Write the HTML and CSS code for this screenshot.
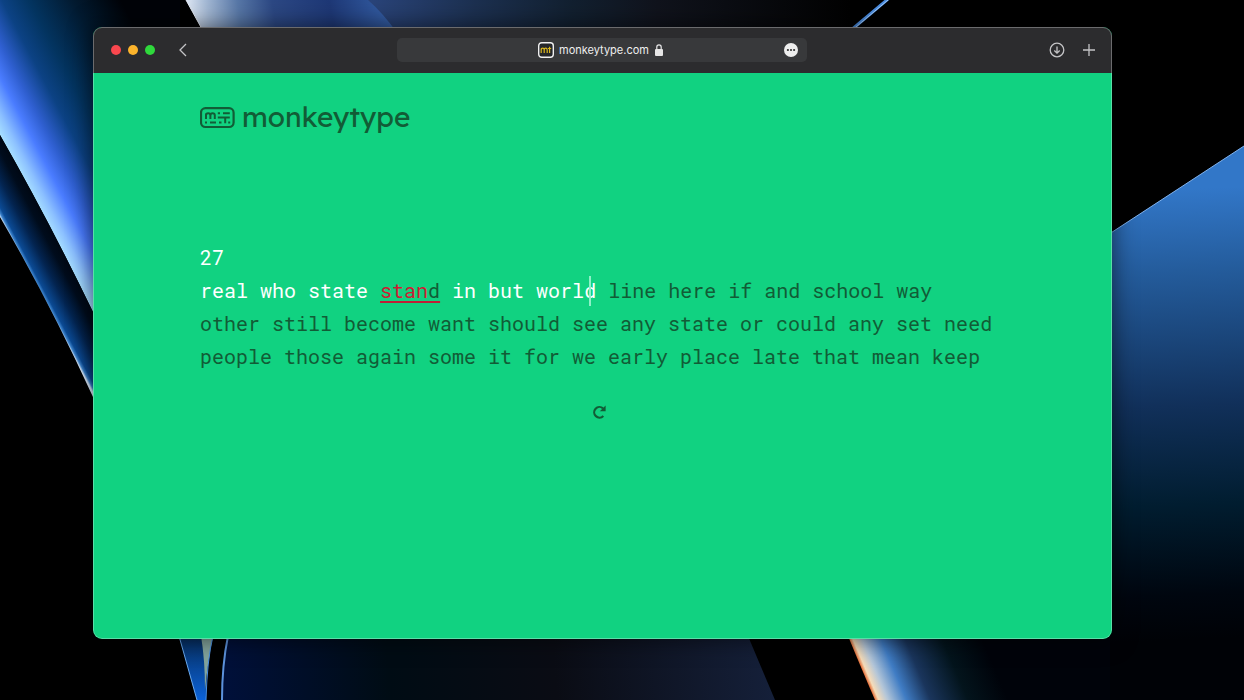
FILE: index.html
```html
<!DOCTYPE html>
<html lang="en">
<head>
    <meta charset="UTF-8">
    <meta name="viewport" content="width=device-width, initial-scale=1.0">
    <title>monkeytype</title>
    <link rel="stylesheet" href="styles.css">
</head>
<body>
    <!-- Desktop wallpaper -->
    <svg class="wallpaper" viewBox="0 0 1244 700" preserveAspectRatio="none" aria-hidden="true">
        <defs>
            <linearGradient id="beam" gradientUnits="userSpaceOnUse" x1="0" y1="135" x2="150" y2="56">
                <stop offset="0" stop-color="#a8e0ff"/>
                <stop offset=".06" stop-color="#8cc0ff"/>
                <stop offset=".16" stop-color="#4a7cff"/>
                <stop offset=".25" stop-color="#2f5fd0"/>
                <stop offset=".38" stop-color="#0c4284"/>
                <stop offset=".52" stop-color="#033460"/>
                <stop offset=".75" stop-color="#021a30"/>
                <stop offset="1" stop-color="#000308"/>
            </linearGradient>
            <linearGradient id="stripe" gradientUnits="userSpaceOnUse" x1="0" y1="217" x2="34" y2="199">
                <stop offset="0" stop-color="#dcecff"/>
                <stop offset=".05" stop-color="#3c83cc"/>
                <stop offset=".12" stop-color="#0b4a94"/>
                <stop offset=".45" stop-color="#032450"/>
                <stop offset=".8" stop-color="#000c1c"/>
                <stop offset="1" stop-color="#000814"/>
            </linearGradient>
            <linearGradient id="sky" gradientUnits="userSpaceOnUse" x1="186" y1="0" x2="386" y2="-30">
                <stop offset="0" stop-color="#dfe8f5"/>
                <stop offset=".1" stop-color="#a3b8d4"/>
                <stop offset=".25" stop-color="#5878a8"/>
                <stop offset=".42" stop-color="#2c4884"/>
                <stop offset=".7" stop-color="#1e3876"/>
                <stop offset="1" stop-color="#3560a8"/>
            </linearGradient>
            <linearGradient id="dusk" gradientUnits="userSpaceOnUse" x1="370" y1="0" x2="850" y2="0">
                <stop offset="0" stop-color="#2a447a"/>
                <stop offset=".22" stop-color="#1c3050"/>
                <stop offset=".42" stop-color="#122030"/>
                <stop offset=".6" stop-color="#10131c"/>
                <stop offset="1" stop-color="#020202"/>
            </linearGradient>
            <linearGradient id="sail" gradientUnits="userSpaceOnUse" x1="1160" y1="190" x2="1180" y2="640">
                <stop offset="0" stop-color="#3277c8"/>
                <stop offset=".18" stop-color="#245c9c"/>
                <stop offset=".48" stop-color="#11305a"/>
                <stop offset=".7" stop-color="#011d30"/>
                <stop offset=".9" stop-color="#00060f"/>
                <stop offset="1" stop-color="#000206"/>
            </linearGradient>
            <linearGradient id="fin" x1="0" y1="0" x2="0" y2="1">
                <stop offset="0" stop-color="#062c5c"/>
                <stop offset="1" stop-color="#0b62d8"/>
            </linearGradient>
            <linearGradient id="deep" gradientUnits="userSpaceOnUse" x1="225" y1="700" x2="775" y2="660">
                <stop offset="0" stop-color="#00103a"/>
                <stop offset=".3" stop-color="#000c14"/>
                <stop offset=".6" stop-color="#0a0c14"/>
                <stop offset="1" stop-color="#15203a"/>
            </linearGradient>
            <linearGradient id="flare" gradientUnits="userSpaceOnUse" x1="862" y1="670" x2="975" y2="622">
                <stop offset="0" stop-color="#e2642c"/>
                <stop offset=".03" stop-color="#f6dcb8"/>
                <stop offset=".1" stop-color="#b4c6d8"/>
                <stop offset=".24" stop-color="#3f7cc4"/>
                <stop offset=".42" stop-color="#1a355c"/>
                <stop offset=".7" stop-color="#03141c"/>
                <stop offset="1" stop-color="#00030a"/>
            </linearGradient>
        </defs>
        <rect width="1244" height="700" fill="#000"/>
        <path d="M0 0H180V480L93 312Q48 219 0 135Z" fill="url(#beam)"/>
        <path d="M0 135Q48 219 93 312V397Q50 303 0 217Z" fill="url(#stripe)"/>
        <path d="M360 0H850V40H360Z" fill="url(#dusk)"/>
        <path d="M186 0H368Q382 12 398 34V40H208Z" fill="url(#sky)"/>
        <path d="M186 0L208 40" stroke="#e8eef8" stroke-width="1"/>
        <path d="M888 -1L850 31" stroke="#4a8ce0" stroke-width="3"/>
        <path d="M888 0L850 32" stroke="#a4ccf8" stroke-width="1"/>
        <path d="M1100 240L1244 146V700H1100Z" fill="url(#sail)"/>
        <path d="M1100 240L1244 146" stroke="#7fb2ee" stroke-width="1"/>
        <path d="M179 636L197 700H206Q206 660 201 636Z" fill="url(#fin)"/>
        <path d="M179 636L197 700" stroke="#6aaaf0" stroke-width="1"/>
        <path d="M201 636Q205 660 205 690Q208 660 213 636Z" fill="#83a49c"/>
        <path d="M206 700Q207 660 213 636" fill="none" stroke="#4a92e8" stroke-width="1"/>
        <path d="M222 700Q222 665 228 636H748L775 700Z" fill="url(#deep)"/>
        <path d="M222 700Q222 665 228 636" fill="none" stroke="#5c92dc" stroke-width="2"/>
        <path d="M848 636Q862 670 875 700H1110V636Z" fill="url(#flare)"/>
    </svg>

    <div class="window">
        <div class="toolbar">
            <div class="toolbar-side">
                <div class="lights">
                    <button class="light close" aria-label="Close"></button>
                    <button class="light minimize" aria-label="Minimize"></button>
                    <button class="light zoom" aria-label="Zoom"></button>
                </div>
                <button class="icon-button" aria-label="Back">
                    <svg width="16" height="16" viewBox="0 0 16 16"><path d="M11 2L5 8L11 14"/></svg>
                </button>
            </div>

            <div class="address-bar">
                <div class="address">
                    <svg width="16" height="16" viewBox="0 0 16 16" aria-hidden="true">
                        <rect x=".7" y=".7" width="14.6" height="14.6" rx="3" fill="#24262a" stroke="#f0f0f0" stroke-width="1.4"/>
                        <path d="M3.2 11V6.5M3.2 8Q3.2 6.2 4.7 6.2T6.2 8V11M6.2 8Q6.2 6.2 7.7 6.2T9.2 8V11M11.6 4.8V11M10 6.5H13.2" fill="none" stroke="#d9b51c" stroke-width="1.2"/>
                    </svg>
                    <input class="url" type="text" aria-label="Address" value="monkeytype.com" size="12">
                    <svg width="10" height="14" viewBox="0 0 10 14" aria-hidden="true">
                        <rect x="1" y="6" width="8" height="7" rx="1" fill="#e6e6e6"/>
                        <path d="M2.8 6.5V4a2.2 2.2 0 0 1 4.4 0V6.5" fill="none" stroke="#e6e6e6" stroke-width="1.2"/>
                    </svg>
                </div>
                <button class="more" aria-label="Page menu">
                    <svg width="14" height="14" viewBox="0 0 14 14">
                        <circle cx="7" cy="7" r="7" fill="#eee"/>
                        <circle cx="3.9" cy="7" r="1.1" fill="#333"/>
                        <circle cx="7" cy="7" r="1.1" fill="#333"/>
                        <circle cx="10.1" cy="7" r="1.1" fill="#333"/>
                    </svg>
                </button>
            </div>

            <div class="toolbar-side actions">
                <button class="icon-button" aria-label="Downloads">
                    <svg width="16" height="16" viewBox="0 0 16 16"><circle cx="8" cy="8" r="6.8"/><path d="M8 4.5V11M5.3 8.5L8 11.2L10.7 8.5"/></svg>
                </button>
                <button class="icon-button" aria-label="New tab">
                    <svg width="16" height="16" viewBox="0 0 16 16"><path d="M8 2V14M2 8H14"/></svg>
                </button>
            </div>
        </div>

        <main class="page">
            <a class="logo" href="#">
                <svg width="36" height="24" viewBox="0 0 36 24" aria-hidden="true">
                    <rect x="1" y="3.2" width="32.6" height="18.8" rx="4.5" stroke-width="2.2"/>
                    <path d="M6 14V8.5M6 10.5Q6 8.2 8.2 8.2T10.4 10.5V14M10.4 10.5Q10.4 8.2 12.6 8.2T14.8 10.5V14"/>
                    <path d="M17.8 8.3H20M23 8.3H29.8M17.8 12.5H29.8M25.2 12.5V18.3M5 17.5H7M10 17.5H16M19 17.5H21.5M28.2 17.5H30.2"/>
                </svg>
                <span>monkeytype</span>
            </a>

            <section class="test">
                <div class="timer">27</div>
                <div class="words">
                    <div><span class="typed">real who state</span> <span class="error"><span class="wrong">stan</span>d</span> <span class="typed">in but worl<span class="caret">d</span></span> line here if and school way</div>
                    <div>other still become want should see any state or could any set need</div>
                    <div>people those again some it for we early place late that mean keep</div>
                </div>
                <button class="restart" aria-label="Restart test">
                    <svg width="16" height="16" viewBox="0 0 16 16">
                        <path d="M12.3 12A5.3 5.3 0 1 1 12 4.3" fill="none" stroke="currentColor" stroke-width="2.2"/>
                        <path d="M14.6 1.5V7.3H8.8Z" fill="currentColor"/>
                    </svg>
                </button>
            </section>
        </main>
    </div>
</body>
</html>
```
FILE: styles.css
```css
* {
    box-sizing: border-box;
}

body {
    margin: 0;
    min-height: 100vh;
    display: flex;
    padding: 27px 132px 61px 93px;
    background: #000;
    font-family: Inter, "Liberation Sans", sans-serif;
}

button {
    padding: 0;
    border: none;
    background: none;
    color: inherit;
    cursor: pointer;
}

svg {
    display: block;
    flex: none;
}

.wallpaper {
    position: absolute;
    inset: 0;
    width: 100%;
    height: 100%;
    z-index: -1;
}

.window {
    position: relative;
    flex: 1;
    min-width: 0;
    display: flex;
    flex-direction: column;
    border-radius: 9px;
    overflow: hidden;
    background: #11d281;
    box-shadow: 0 0 24px rgba(0, 0, 0, 0.6);
}

/* thin light edge over toolbar and page */
.window::after {
    content: "";
    position: absolute;
    inset: 0;
    border: 1px solid rgba(255, 255, 255, 0.3);
    border-radius: 9px;
    pointer-events: none;
}

.toolbar {
    display: grid;
    grid-template-columns: 1fr 410px 1fr;
    align-items: center;
    height: 46px;
    padding: 0 15px 0 14px;
    background: #2c2c2e;
}

.toolbar-side {
    display: flex;
    align-items: center;
    gap: 20px;
}

.actions {
    justify-content: flex-end;
    gap: 16px;
}

.lights {
    display: flex;
    gap: 7px;
    padding-left: 4px;
}

.light {
    width: 10px;
    height: 10px;
    border-radius: 50%;
}

.close {
    background: #f9474e;
}

.minimize {
    background: #fcb42c;
}

.zoom {
    background: #2fd93c;
}

.icon-button svg {
    fill: none;
    stroke: #c4c4c6;
    stroke-width: 1.3;
}

.address-bar {
    display: flex;
    align-items: center;
    height: 24px;
    padding: 0 9px;
    border-radius: 5px;
    background: #38393b;
}

.address {
    flex: 1;
    display: flex;
    align-items: center;
    justify-content: center;
    gap: 5px;
    padding-left: 12px;
}

.url {
    field-sizing: content;
    padding: 0;
    border: none;
    outline: none;
    background: none;
    color: #eee;
    font: 11px Inter, sans-serif;
}

.page {
    flex: 1;
    padding: 27px 114px 27px 107px;
    color: #125c36;
}

.logo {
    display: flex;
    align-items: center;
    gap: 6px;
    color: inherit;
    font-family: "Lexend Deca", Inter, sans-serif;
    font-size: 28px;
    line-height: 34px;
    text-decoration: none;
}

.logo svg {
    fill: none;
    stroke: currentColor;
    stroke-width: 2;
}

.test {
    margin-top: 107px;
    font-family: "Roboto Mono", "DejaVu Sans Mono", monospace;
    font-size: 20px;
    line-height: 33px;
}

.timer,
.typed {
    color: #fff;
}

.words div {
    white-space: nowrap;
}

.error {
    text-decoration: underline 2px #c01f36;
    text-decoration-skip-ink: none;
    text-underline-offset: 3px;
}

.wrong {
    color: #d01a33;
}

.caret {
    position: relative;
}

.caret::before {
    content: "";
    position: absolute;
    top: -1px;
    left: 5px;
    width: 2px;
    height: 30px;
    background: #8ff0c8;
}

.restart {
    display: block;
    margin: 31px auto 0;
}
```
